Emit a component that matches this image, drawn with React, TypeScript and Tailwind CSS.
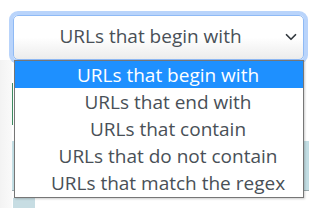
import { ChevronDown } from "lucide-react";

const options = [
  "URLs that begin with",
  "URLs that end with",
  "URLs that contain",
  "URLs that do not contain",
  "URLs that match the regex",
];

const App = () => {
  return (
    <div className="relative w-[309px] h-[208px] overflow-hidden bg-white font-['Open_Sans',sans-serif]">
      {/* select with focus ring */}
      <div className="pt-[15px] pl-[13px]">
        <div className="relative flex items-center w-[291px] h-[45px] rounded-[5px] border border-[#8fbaf5] bg-gradient-to-b from-white via-white to-[#ececec] shadow-[0_0_0_4px_#b9d4fb] pr-[16px]">
          <span className="flex-1 text-center text-[19px] text-[#495057] leading-none pb-[2px]">
            URLs that begin with
          </span>
          <ChevronDown className="absolute right-[3px] top-[12px] w-[18px] h-[18px] text-[#343a40]" strokeWidth={2.3} />
        </div>
      </div>

      {/* page content partly hidden behind the open list */}
      <div className="flex h-[148px]">
        <div className="w-[12px] bg-gradient-to-r from-[#f3f3f3] to-[#fafafa]" />
        <div className="flex flex-col flex-1">
          <div className="mt-[23px] h-[42px] border-l border-[#3f8a60]" />
          <div className="mt-[16px] h-[50px] bg-[#c3dee4] border-b border-[#9aa9ad]" />
          <div className="mt-[7px] ml-[1px] w-[22px] flex-1 bg-[#c7dde3]" />
        </div>
      </div>

      {/* open option list */}
      <div className="absolute left-[14px] top-[60px] w-[290px] h-[138px] border border-[#767676] bg-white shadow-[1px_1px_2px_rgba(0,0,0,0.2)] grid grid-rows-5">
        {options.map((o, i) => (
          <div
            key={o}
            className={
              i === 0
                ? "flex items-center justify-center pl-[18px] pt-[1px] bg-[#1e90ff] text-white text-[19px] leading-none"
                : "flex items-center justify-center pl-[18px] pt-[1px] text-[#495057] text-[19px] leading-none"
            }
          >
            {o}
          </div>
        ))}
      </div>
    </div>
  );
};

export default App;
